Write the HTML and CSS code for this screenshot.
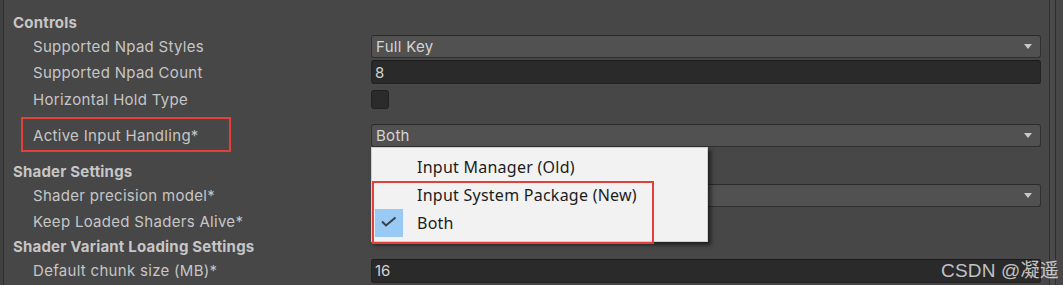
FILE: index.html
```html
<!DOCTYPE html>
<html>
<head>
<meta charset="utf-8">
<link rel="stylesheet" href="styles.css">
</head>
<body>
<div class="window">
  <div class="strip-left"></div>
  <div class="content">
    <div class="row header"><span class="hlabel">Controls</span></div>
    <div class="row r-styles"><span class="label">Supported Npad Styles</span><div class="dropdown"><span>Full Key</span><i class="arrow"></i></div></div>
    <div class="row r-count"><span class="label">Supported Npad Count</span><div class="numfield"><span>8</span></div></div>
    <div class="row r-hold"><span class="label">Horizontal Hold Type</span><div class="checkbox"></div></div>
    <div class="row r-active"><span class="label">Active Input Handling*</span><div class="dropdown"><span>Both</span><i class="arrow"></i></div></div>
    <div class="row header r-shader"><span class="hlabel">Shader Settings</span></div>
    <div class="row r-prec"><span class="label">Shader precision model*</span><div class="dropdown"><span></span><i class="arrow"></i></div></div>
    <div class="row r-keep"><span class="label">Keep Loaded Shaders Alive*</span><div class="checkbox"></div></div>
    <div class="row header r-variant"><span class="hlabel">Shader Variant Loading Settings</span></div>
    <div class="row r-chunk"><span class="label">Default chunk size (MB)*</span><div class="numfield"><span>16</span></div></div>
  </div>
  <div class="strip-mid"></div>
  <div class="strip-right"></div>

  <div class="popup">
    <div class="item"><span class="mark"></span><span class="itext">Input Manager (Old)</span></div>
    <div class="item"><span class="mark"></span><span class="itext">Input System Package (New)</span></div>
    <div class="item"><span class="mark checked"><svg width="28" height="28" viewBox="0 0 28 28"><path d="M7 12.5 L11 16.5 L20.5 8.5" fill="none" stroke="#3a3f45" stroke-width="2"/></svg></span><span class="itext">Both</span></div>
  </div>

  <div class="redbox rb1"></div>
  <div class="redbox rb2"></div>
  <div class="watermark">CSDN @凝遥</div>
</div>
</body>
</html>
```

FILE: styles.css
```css
html, body {
  margin: 0;
  padding: 0;
}
body {
  width: 1063px;
  height: 285px;
  overflow: hidden;
  background: #474747;
  font-family: Inter, "Noto Sans", sans-serif;
}
.window {
  position: relative;
  display: flex;
  width: 1063px;
  height: 285px;
  background: #474747;
}
.strip-left {
  width: 3px;
  background: #414141;
  border-right: 1px solid #2f2f2f;
}
.content {
  width: 1045px;
  border-right: 1px solid #2d2d2d;
  padding-top: 10px;
  display: flex;
  flex-direction: column;
}
.strip-mid {
  width: 5px;
  background: #4a4a4a;
  border-right: 1px solid #2d2d2d;
}
.strip-right {
  flex: 1;
  background: #474747;
}
.row {
  display: flex;
  align-items: center;
  height: 26px;
}
.header { height: 24px; }
.hlabel {
  padding-left: 9px;
  font-weight: 700;
  font-size: 15px;
  letter-spacing: 0.2px;
  color: #c6c6c6;
}
.label {
  width: 338px;
  padding-left: 29px;
  font-size: 15px;
  letter-spacing: 0.3px;
  color: #c6c6c6;
  white-space: nowrap;
}
.r-styles { height: 24px; }
.r-count { height: 28px; }
.r-hold { height: 26px; }
.r-active { height: 27px; margin-top: 10px; margin-bottom: 9px; }
.r-shader { height: 26px; }
.r-prec { height: 23px; }
.r-keep { height: 29px; }
.r-variant { height: 21px; }
.r-chunk { height: 27px; }

.dropdown {
  position: relative;
  box-sizing: border-box;
  width: 670px;
  height: 23px;
  background: #515151;
  border: 1px solid #303030;
  border-top-color: #2a2a2a;
  border-radius: 3px;
  display: flex;
  align-items: center;
  padding-left: 4px;
  font-size: 15px;
  letter-spacing: 0.3px;
  color: #d4d4d4;
}
.arrow {
  position: absolute;
  right: 8px;
  top: 8px;
  width: 0;
  height: 0;
  border-left: 4.5px solid transparent;
  border-right: 4.5px solid transparent;
  border-top: 5px solid #c8c8c8;
}
.numfield {
  box-sizing: border-box;
  width: 670px;
  height: 24px;
  background: #2a2a2a;
  border: 1px solid #222;
  border-top-color: #1b1b1b;
  border-radius: 3px;
  display: flex;
  align-items: center;
  padding-left: 3px;
  font-size: 15px;
  color: #d4d4d4;
}
.checkbox {
  box-sizing: border-box;
  width: 18px;
  height: 19px;
  background: #2b2b2b;
  border: 1px solid #202020;
  border-radius: 3px;
}

.popup {
  position: absolute;
  left: 371px;
  top: 147px;
  box-sizing: border-box;
  width: 337px;
  height: 95px;
  background: #f2f2f2;
  border: 1px solid #cfcfcf;
  box-shadow: 3px 3px 4px rgba(0, 0, 0, 0.55);
  padding-top: 5px;
  font-family: "Noto Sans", "Noto Sans CJK SC", sans-serif;
}
.item {
  display: flex;
  align-items: center;
  height: 28px;
}
.mark {
  width: 28px;
  height: 28px;
  margin-left: 3px;
  margin-right: 14px;
}
.mark.checked {
  background: #99caf5;
}
.mark svg { display: block; }
.itext {
  font-size: 16px;
  letter-spacing: 0.25px;
  color: #1c1c1c;
  white-space: nowrap;
}

.redbox {
  position: absolute;
  box-sizing: border-box;
  border: 2px solid #e4403a;
}
.rb1 { left: 21px; top: 117px; width: 210px; height: 35px; }
.rb2 { left: 372px; top: 181px; width: 282px; height: 63px; }

.watermark {
  position: absolute;
  left: 941px;
  top: 255px;
  font-family: "Liberation Sans", "Noto Sans CJK SC", sans-serif;
  font-size: 19px;
  letter-spacing: 0.2px;
  color: rgba(230, 230, 230, 0.82);
  white-space: nowrap;
}
```
